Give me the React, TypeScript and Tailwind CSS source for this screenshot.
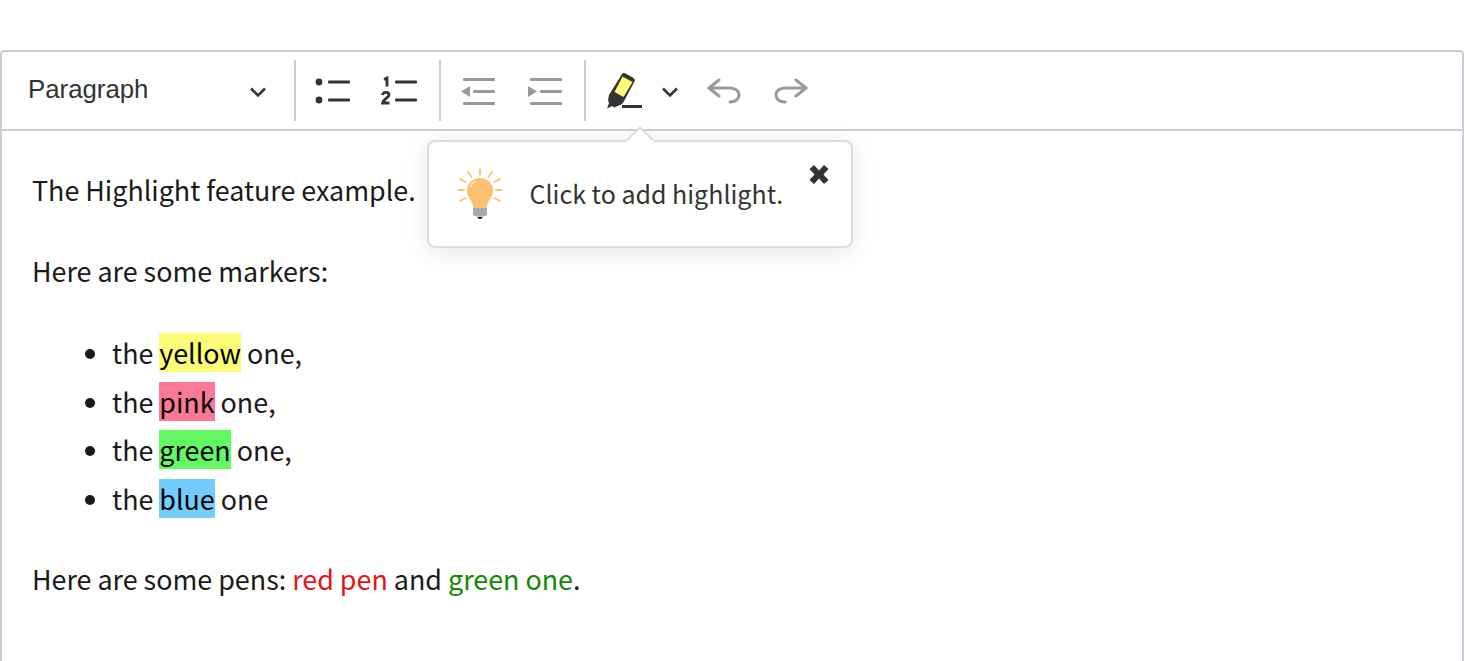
import React from "react";

const body = "[font-family:'Noto_Sans_CJK_SC','Source_Sans_Pro',sans-serif]";

function Sep() {
  return <div className="w-[2px] h-[61px] bg-[#ccced1] shrink-0" />;
}

function Btn({ w, ml, children }: { w: string; ml?: string; children: React.ReactNode }) {
  return <div className={`flex items-center justify-center h-[61px] shrink-0 ${w} ${ml ?? ""}`}>{children}</div>;
}

function Chevron({ w = 18 }: { w?: number }) {
  return (
    <svg width={w} height="12" viewBox="0 0 18 12" fill="none" className="translate-y-[1px]">
      <path d="M2 2.5 L9 9.5 L16 2.5" stroke="#333" strokeWidth="2.6" />
    </svg>
  );
}

export default function App() {
  return (
    <div className="w-[1464px] h-[661px] overflow-hidden bg-white pt-[50px]">
      <div className="relative h-[700px] border-2 border-[#ccced1] rounded-[4px]">
        <div className="flex items-center h-[79px] border-b-2 border-[#ccced1]">
          <div className="w-[292px] shrink-0 flex items-center justify-between pl-[26px] pr-[27px] font-['Liberation_Sans',sans-serif] text-[25.8px] text-[#333]">
            <span className="-mt-[2px]">Paragraph</span>
            <Chevron />
          </div>
          <Sep />
          <Btn w="w-[66px]" ml="ml-[4px]">
            <svg width="36" height="28" viewBox="0 0 36 28">
              <circle cx="4" cy="5" r="3.4" fill="#333" />
              <circle cx="4" cy="23" r="3.4" fill="#333" />
              <rect x="13" y="3.5" width="22" height="3" rx="1" fill="#333" />
              <rect x="13" y="21.5" width="22" height="3" rx="1" fill="#333" />
            </svg>
          </Btn>
          <Btn w="w-[66px]">
            <svg width="36" height="30" viewBox="0 0 36 30">
              <path d="M3 3.5 L6 2 V10.5" fill="none" stroke="#333" strokeWidth="2.8" />
              <path d="M1.5 19 C2 15.5 8 15.5 8 19 C8 21.5 2.5 23 1.5 27 H8.5" fill="none" stroke="#333" strokeWidth="2.8" />
              <rect x="14" y="4.5" width="22" height="3" rx="1" fill="#333" />
              <rect x="14" y="22.5" width="22" height="3" rx="1" fill="#333" />
            </svg>
          </Btn>
          <div className="w-[7px] shrink-0" />
          <Sep />
          <Btn w="w-[66px]" ml="ml-[4px]">
            <svg width="36" height="28" viewBox="0 0 36 28" fill="#999">
              <rect x="3" y="1" width="32" height="3" rx="1" />
              <rect x="13" y="13" width="22" height="3" rx="1" />
              <rect x="3" y="25" width="32" height="3" rx="1" />
              <path d="M1 14.5 L10 9 V20 Z" />
            </svg>
          </Btn>
          <Btn w="w-[66px]" ml="ml-[1px]">
            <svg width="36" height="28" viewBox="0 0 36 28" fill="#999">
              <rect x="3" y="1" width="32" height="3" rx="1" />
              <rect x="13" y="13" width="22" height="3" rx="1" />
              <rect x="3" y="25" width="32" height="3" rx="1" />
              <path d="M10 14.5 L1 9 V20 Z" />
            </svg>
          </Btn>
          <div className="w-[6px] shrink-0" />
          <Sep />
          <Btn w="w-[66px]" ml="ml-[3px]">
            <svg width="38" height="38" viewBox="0 0 38 38" className="ml-[4px]">
              <path d="M17 2 Q18.5 0.5 20.5 1.5 L28.5 6 Q30.5 7.5 29.5 9.5 L18.5 30 L16.5 32.5 L9 35.5 L7.5 34 L2 36.5 L4 31 L3 28 L4 23 Z" fill="#333" />
              <path d="M17.5 4.5 L27.5 10 L18.5 25 L9.5 20 Z" fill="#fdfd77" />
              <rect x="17" y="33" width="20" height="3" fill="#333" />
            </svg>
          </Btn>
          <Btn w="w-[26px]" ml="ml-[2px]"><Chevron /></Btn>
          <Btn w="w-[66px]" ml="ml-[8px]">
            <svg width="36" height="26" viewBox="0 0 36 26" fill="none" stroke="#999" strokeWidth="3" strokeLinecap="round" strokeLinejoin="round">
              <path d="M13 2 L3 10 L13 18" />
              <path d="M3 10 H24 C36 10 36 24 24 24" />
            </svg>
          </Btn>
          <Btn w="w-[66px]" ml="ml-[1px]">
            <svg width="36" height="26" viewBox="0 0 36 26" fill="none" stroke="#999" strokeWidth="3" strokeLinecap="round" strokeLinejoin="round">
              <path d="M23 2 L33 10 L23 18" />
              <path d="M33 10 H12 C0 10 0 24 12 24" />
            </svg>
          </Btn>
        </div>

        <div className={`pl-[30px] pt-[35.4px] text-[26.86px] leading-[48.6px] text-[#1a1a1a] ${body}`}>
          <p className="mb-[32.4px]">The Highlight feature example.</p>
          <p className="mb-[33.2px]">Here are some markers:</p>
          <ul className="list-disc pl-[80px] mb-[31.6px]">
            <li>the <mark className="bg-[#fdfd77] text-black">yellow</mark> one,</li>
            <li>the <mark className="bg-[#fc7899] text-black">pink</mark> one,</li>
            <li>the <mark className="bg-[#62f962] text-black">green</mark> one,</li>
            <li>the <mark className="bg-[#72ccfd] text-black">blue</mark> one</li>
          </ul>
          <p>
            Here are some pens: <span className="text-[#e71313]">red pen</span> and <span className="text-[#128a00]">green one</span>.
          </p>
        </div>

        {/* balloon */}
        <div className={`absolute left-[425px] top-[88px] w-[426px] h-[108px] bg-white border-2 border-[#dcdcdc] rounded-[8px] shadow-[0_4px_24px_rgba(0,0,0,0.1)] flex items-center pl-[29px] ${body}`}>
          <svg className="absolute left-[194px] top-[-16px]" width="34" height="16" viewBox="0 0 34 16">
            <path d="M2 16 L17 1.5 L32 16" fill="white" stroke="#dcdcdc" strokeWidth="2" />
            <rect x="3" y="15" width="28" height="2" fill="white" />
          </svg>
          <svg width="44" height="52" viewBox="0 0 44 52" className="shrink-0">
            <g stroke="#fbc16f" strokeWidth="1.8" strokeLinecap="round">
              <path d="M22 1 V6.5" />
              <path d="M10 4 L13.6 9" />
              <path d="M34 4 L30.4 9" />
              <path d="M2 11 L7.5 14" />
              <path d="M42 11 L36.5 14" />
              <path d="M0.5 22 H6" />
              <path d="M38 22 H43.5" />
              <path d="M2 33 L7.5 30" />
              <path d="M42 33 L36.5 30" />
            </g>
            <path d="M22 10 C14 10 9 16 9 22.5 C9 29.5 15 33 15.5 40 H28.5 C29 33 35 29.5 35 22.5 C35 16 30 10 22 10 Z" fill="#fbc16f" />
            <path d="M15 40 H29 V47 Q26 49 22 49 Q18 49 15 47 Z" fill="#a9a9a9" />
            <path d="M19.5 49 H24.5 L23.5 51 H20.5 Z" fill="#222" />
            <path d="M13 19 C13.5 16 15.5 14 18 13" stroke="#fff" strokeOpacity="0.75" strokeWidth="1.3" fill="none" />
          </svg>
          <span className="ml-[27.5px] text-[25px] text-[#333] whitespace-nowrap">Click to add highlight.</span>
          <svg className="absolute left-[380px] top-[22px]" width="20" height="21" viewBox="0 0 20 21">
            <path d="M5 1 L10 6.5 L15 1 L19.5 5 L14.5 10.5 L19.5 16 L15 20 L10 14.5 L5 20 L0.5 16 L5.5 10.5 L0.5 5 Z" fill="#333" />
          </svg>
        </div>
      </div>
    </div>
  );
}
